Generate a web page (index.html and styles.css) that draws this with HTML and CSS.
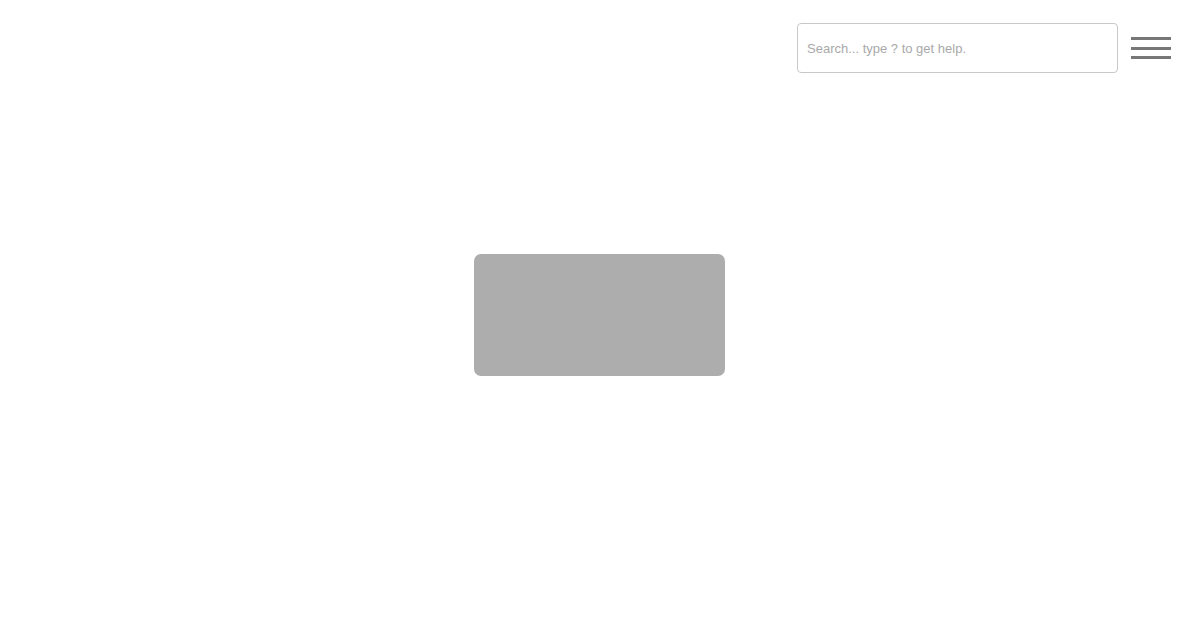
FILE: index.html
```html
<!DOCTYPE html>
<html lang="en">
<head>
<meta charset="utf-8">
<title>Search</title>
<link rel="stylesheet" href="styles.css">
</head>
<body>
<div class="page">
  <header class="topbar">
    <input class="search" type="text" placeholder="Search... type ? to get help.">
    <button class="menu" aria-label="Menu">
      <span class="bar"></span>
      <span class="bar"></span>
      <span class="bar"></span>
    </button>
  </header>
  <main class="stage">
    <div class="placeholder"></div>
  </main>
</div>
</body>
</html>
```

FILE: styles.css
```css
html, body {
  margin: 0;
  padding: 0;
  background: #ffffff;
  font-family: "Liberation Sans", Arial, sans-serif;
}

.page {
  display: grid;
  height: 630px;
  width: 1200px;
}

.topbar,
.stage {
  grid-area: 1 / 1;
}

.topbar {
  align-self: start;
  display: flex;
  justify-content: flex-end;
  align-items: center;
  gap: 13px;
  padding: 23px 29px 0 0;
  z-index: 1;
}

.search {
  box-sizing: border-box;
  width: 321px;
  height: 50px;
  border: 1px solid #c8c8c8;
  border-radius: 4px;
  padding: 1px 0 0 9px;
  font-family: "Liberation Sans", Arial, sans-serif;
  font-size: 13px;
  color: #555;
  outline: none;
  margin: 0;
}

.search::placeholder {
  color: #a9a9a9;
}

.menu {
  display: flex;
  flex-direction: column;
  gap: 6.5px;
  width: 40px;
  padding: 0;
  margin: 0;
  border: none;
  background: transparent;
  cursor: pointer;
}

.bar {
  display: block;
  height: 3px;
  width: 40px;
  background: #777777;
}

.stage {
  display: flex;
  align-items: center;
  justify-content: center;
}

.placeholder {
  width: 251px;
  height: 122px;
  background: #adadad;
  border-radius: 7px;
  margin-left: -1px;
}
```
